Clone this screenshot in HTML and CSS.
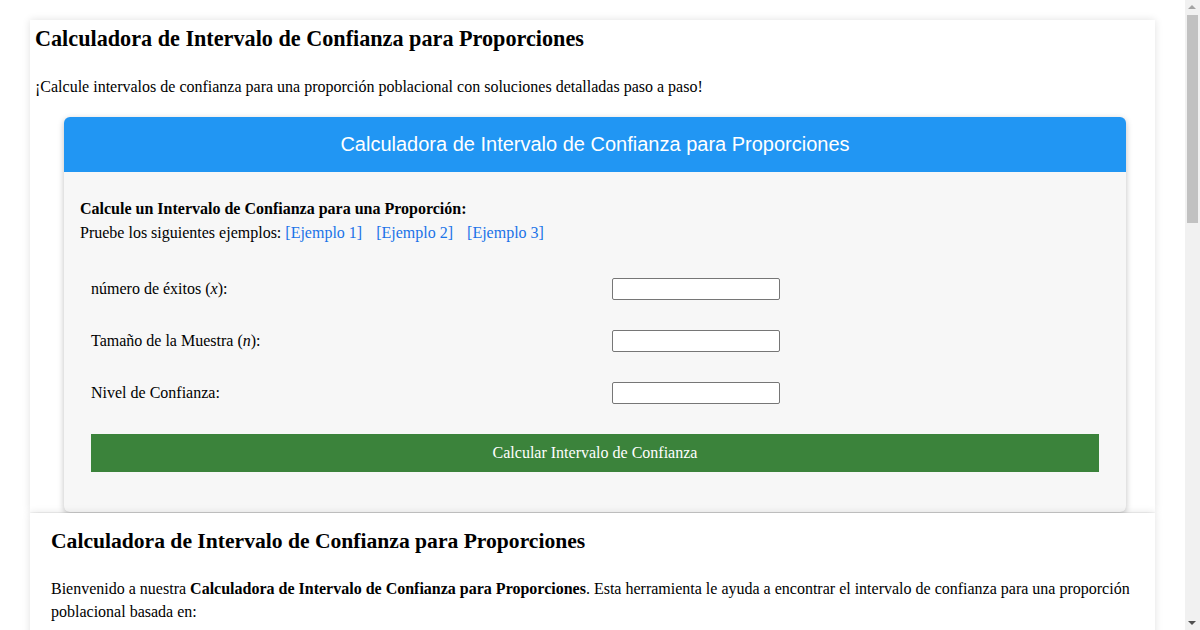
FILE: index.html
```html
<!DOCTYPE html>
<html lang="es">
<head>
<meta charset="utf-8">
<title>Calculadora de Intervalo de Confianza para Proporciones</title>
<link rel="stylesheet" href="styles.css">
</head>
<body>
<div class="page">
  <section class="top">
    <h1 class="title">Calculadora de Intervalo de Confianza para Proporciones</h1>
    <p class="lead">¡Calcule intervalos de confianza para una proporción poblacional con soluciones detalladas paso a paso!</p>
    <div class="calc">
      <div class="calc-head">Calculadora de Intervalo de Confianza para Proporciones</div>
      <div class="calc-body">
        <div class="intro">
          <strong>Calcule un Intervalo de Confianza para una Proporción:</strong><br>
          Pruebe los siguientes ejemplos: <a href="#" class="ex">[Ejemplo 1]</a> <a href="#" class="ex">[Ejemplo 2]</a> <a href="#" class="ex">[Ejemplo 3]</a>
        </div>
        <div class="form">
          <div class="row">
            <label class="lbl">número de éxitos (<i>x</i>):</label>
            <input class="inp" type="text">
          </div>
          <div class="row">
            <label class="lbl">Tamaño de la Muestra (<i>n</i>):</label>
            <input class="inp" type="text">
          </div>
          <div class="row">
            <label class="lbl">Nivel de Confianza:</label>
            <input class="inp" type="text">
          </div>
          <button class="btn" type="button">Calcular Intervalo de Confianza</button>
        </div>
      </div>
    </div>
  </section>
  <section class="info">
    <h2 class="info-title">Calculadora de Intervalo de Confianza para Proporciones</h2>
    <p class="info-text">Bienvenido a nuestra <strong>Calculadora de Intervalo de Confianza para Proporciones</strong>. Esta herramienta le ayuda a encontrar el intervalo de confianza para una proporción poblacional basada en:</p>
    <ul class="info-list">
      <li>El número de éxitos observados en la muestra</li>
      <li>El tamaño de la muestra</li>
      <li>El nivel de confianza deseado</li>
    </ul>
    <p class="info-text">Obtenga resultados precisos con explicaciones detalladas paso a paso.</p>
  </section>
</div>
<div class="scrollbar" aria-hidden="true">
  <span class="sb-up"></span>
  <span class="sb-thumb"></span>
  <span class="sb-down"></span>
</div>
</body>
</html>
```
FILE: styles.css
```css
html, body {
  margin: 0;
  padding: 0;
  background: #ffffff;
  height: 100%;
  overflow: hidden;
}
body {
  font-family: "Liberation Serif", "Times New Roman", serif;
  font-size: 16px;
  color: #000;
}
.page {
  width: 1125px;
  margin: 20px 0 0 30px;
}
.top {
  background: #fff;
  box-shadow: 0 0 8px rgba(0,0,0,0.12);
  padding: 5px 5px 0 5px;
}
.title {
  font-size: 22.2px;
  font-weight: bold;
  margin: 0;
  line-height: 28px;
}
.lead {
  margin: 22px 0 0 0;
  line-height: 24px;
}
.calc {
  width: 1062px;
  margin: 18px 0 0 29px;
  border-radius: 6px;
  overflow: hidden;
  background: #f7f7f7;
  box-shadow: 0 2px 6px rgba(0,0,0,0.25);
}
.calc-head {
  background: #2196f3;
  color: #fff;
  font-family: "Liberation Sans", Arial, sans-serif;
  font-size: 20px;
  height: 55px;
  display: flex;
  align-items: center;
  justify-content: center;
}
.calc-body {
  padding: 25px 27px 40px 16px;
}
.intro {
  line-height: 24px;
}
.ex {
  color: #1a73e8;
  text-decoration: none;
  margin-right: 10px;
}
.form {
  padding: 33px 0 0 11px;
}
.row {
  display: grid;
  grid-template-columns: 521px 1fr;
  align-items: center;
  height: 22px;
  margin-bottom: 30px;
}
.lbl {
  line-height: 22px;
}
.inp {
  width: 168px;
  height: 22px;
  box-sizing: border-box;
  border: 1px solid #767676;
  border-radius: 2px;
  background: #fff;
  margin: 0;
  padding: 1px 2px;
}
.btn {
  display: block;
  width: 100%;
  height: 38px;
  margin-top: 0;
  border: none;
  background: #3b833b;
  color: #fff;
  font-family: "Liberation Serif", "Times New Roman", serif;
  font-size: 16px;
}
.info {
  background: #fff;
  box-shadow: 0 0 8px rgba(0,0,0,0.12);
  padding: 14px 20px 20px 21px;
  margin-top: 1px;
}
.info-title {
  font-size: 21.6px;
  margin: 0;
  line-height: 28px;
}
.info-text {
  margin: 22px 0 0 0;
  line-height: 23px;
}
.info-list {
  margin: 16px 0 0 0;
  line-height: 24px;
}
.scrollbar {
  position: fixed;
  top: 0;
  right: 0;
  width: 15px;
  height: 100%;
  background: #f1f1f1;
}
.sb-up, .sb-down {
  position: absolute;
  left: 3px;
  width: 0;
  height: 0;
  border-left: 4px solid transparent;
  border-right: 4px solid transparent;
}
.sb-up {
  top: 5px;
  border-bottom: 4px solid #a3a3a3;
}
.sb-down {
  bottom: 5px;
  border-top: 4px solid #505050;
}
.sb-thumb {
  position: absolute;
  top: 15px;
  left: 2px;
  width: 11px;
  height: 208px;
  background: #c1c1c1;
}
```
